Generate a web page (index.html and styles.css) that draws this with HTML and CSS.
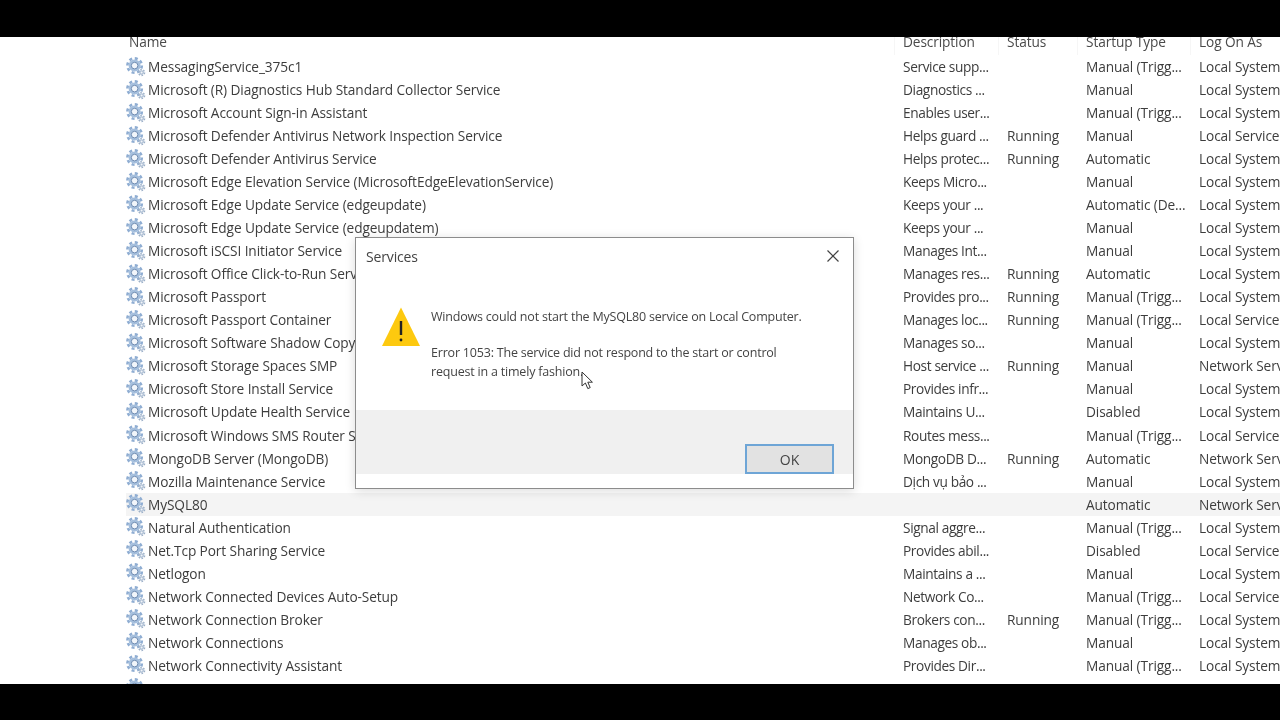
FILE: index.html
```html
<!DOCTYPE html>
<html lang="en">
<head>
<meta charset="utf-8">
<title>Services</title>
<link rel="stylesheet" href="styles.css">
</head>
<body>
<svg class="defs" width="0" height="0" aria-hidden="true">
  <symbol id="gear" viewBox="0 0 20 20">
    <circle class="g-teeth" cx="8.6" cy="8.6" r="7.2"/>
    <circle class="g-body" cx="8.6" cy="8.6" r="6"/>
    <circle class="g-hole" cx="8.6" cy="8.6" r="3.3"/>
    <circle class="g-teeth2" cx="15.6" cy="15.6" r="3"/>
    <circle class="g-body2" cx="15.6" cy="15.6" r="2.4"/>
    <circle class="g-hole2" cx="15.6" cy="15.6" r="1"/>
  </symbol>
</svg>
<div class="bar top"></div>
<main class="window">
  <div class="row head"><span class="cell">Name</span><span class="cell">Description</span><span class="cell">Status</span><span class="cell">Startup Type</span><span class="cell">Log On As</span></div>
  <div class="row"><svg class="gear"><use href="#gear"/></svg><span>MessagingService_375c1</span><span>Service supp...</span><span></span><span>Manual (Trigg...</span><span>Local System</span></div>
  <div class="row"><svg class="gear"><use href="#gear"/></svg><span>Microsoft (R) Diagnostics Hub Standard Collector Service</span><span>Diagnostics ...</span><span></span><span>Manual</span><span>Local System</span></div>
  <div class="row"><svg class="gear"><use href="#gear"/></svg><span>Microsoft Account Sign-in Assistant</span><span>Enables user...</span><span></span><span>Manual (Trigg...</span><span>Local System</span></div>
  <div class="row"><svg class="gear"><use href="#gear"/></svg><span>Microsoft Defender Antivirus Network Inspection Service</span><span>Helps guard ...</span><span>Running</span><span>Manual</span><span>Local Service</span></div>
  <div class="row"><svg class="gear"><use href="#gear"/></svg><span>Microsoft Defender Antivirus Service</span><span>Helps protec...</span><span>Running</span><span>Automatic</span><span>Local System</span></div>
  <div class="row"><svg class="gear"><use href="#gear"/></svg><span>Microsoft Edge Elevation Service (MicrosoftEdgeElevationService)</span><span>Keeps Micro...</span><span></span><span>Manual</span><span>Local System</span></div>
  <div class="row"><svg class="gear"><use href="#gear"/></svg><span>Microsoft Edge Update Service (edgeupdate)</span><span>Keeps your ...</span><span></span><span>Automatic (De...</span><span>Local System</span></div>
  <div class="row"><svg class="gear"><use href="#gear"/></svg><span>Microsoft Edge Update Service (edgeupdatem)</span><span>Keeps your ...</span><span></span><span>Manual</span><span>Local System</span></div>
  <div class="row"><svg class="gear"><use href="#gear"/></svg><span>Microsoft iSCSI Initiator Service</span><span>Manages Int...</span><span></span><span>Manual</span><span>Local System</span></div>
  <div class="row"><svg class="gear"><use href="#gear"/></svg><span>Microsoft Office Click-to-Run Service</span><span>Manages res...</span><span>Running</span><span>Automatic</span><span>Local System</span></div>
  <div class="row"><svg class="gear"><use href="#gear"/></svg><span>Microsoft Passport</span><span>Provides pro...</span><span>Running</span><span>Manual (Trigg...</span><span>Local System</span></div>
  <div class="row"><svg class="gear"><use href="#gear"/></svg><span>Microsoft Passport Container</span><span>Manages loc...</span><span>Running</span><span>Manual (Trigg...</span><span>Local Service</span></div>
  <div class="row"><svg class="gear"><use href="#gear"/></svg><span>Microsoft Software Shadow Copy Provider</span><span>Manages so...</span><span></span><span>Manual</span><span>Local System</span></div>
  <div class="row"><svg class="gear"><use href="#gear"/></svg><span>Microsoft Storage Spaces SMP</span><span>Host service ...</span><span>Running</span><span>Manual</span><span>Network Serv</span></div>
  <div class="row"><svg class="gear"><use href="#gear"/></svg><span>Microsoft Store Install Service</span><span>Provides infr...</span><span></span><span>Manual</span><span>Local System</span></div>
  <div class="row"><svg class="gear"><use href="#gear"/></svg><span>Microsoft Update Health Service</span><span>Maintains U...</span><span></span><span>Disabled</span><span>Local System</span></div>
  <div class="row"><svg class="gear"><use href="#gear"/></svg><span>Microsoft Windows SMS Router Service.</span><span>Routes mess...</span><span></span><span>Manual (Trigg...</span><span>Local Service</span></div>
  <div class="row"><svg class="gear"><use href="#gear"/></svg><span>MongoDB Server (MongoDB)</span><span>MongoDB D...</span><span>Running</span><span>Automatic</span><span>Network Serv</span></div>
  <div class="row"><svg class="gear"><use href="#gear"/></svg><span>Mozilla Maintenance Service</span><span>Dịch vụ bảo ...</span><span></span><span>Manual</span><span>Local System</span></div>
  <div class="row selected"><svg class="gear"><use href="#gear"/></svg><span>MySQL80</span><span></span><span></span><span>Automatic</span><span>Network Serv</span></div>
  <div class="row"><svg class="gear"><use href="#gear"/></svg><span>Natural Authentication</span><span>Signal aggre...</span><span></span><span>Manual (Trigg...</span><span>Local System</span></div>
  <div class="row"><svg class="gear"><use href="#gear"/></svg><span>Net.Tcp Port Sharing Service</span><span>Provides abil...</span><span></span><span>Disabled</span><span>Local Service</span></div>
  <div class="row"><svg class="gear"><use href="#gear"/></svg><span>Netlogon</span><span>Maintains a ...</span><span></span><span>Manual</span><span>Local System</span></div>
  <div class="row"><svg class="gear"><use href="#gear"/></svg><span>Network Connected Devices Auto-Setup</span><span>Network Co...</span><span></span><span>Manual (Trigg...</span><span>Local Service</span></div>
  <div class="row"><svg class="gear"><use href="#gear"/></svg><span>Network Connection Broker</span><span>Brokers con...</span><span>Running</span><span>Manual (Trigg...</span><span>Local System</span></div>
  <div class="row"><svg class="gear"><use href="#gear"/></svg><span>Network Connections</span><span>Manages ob...</span><span></span><span>Manual</span><span>Local System</span></div>
  <div class="row"><svg class="gear"><use href="#gear"/></svg><span>Network Connectivity Assistant</span><span>Provides Dir...</span><span></span><span>Manual (Trigg...</span><span>Local System</span></div>
  <div class="row clipped"><svg class="gear"><use href="#gear"/></svg></div>
</main>
<div class="bar bottom"></div>

<section class="dialog" role="dialog" aria-label="Services">
  <header class="dialog-title">
    <span>Services</span>
    <svg class="close" viewBox="0 0 12 12"><path d="M.5.5l11 11M11.5.5l-11 11"/></svg>
  </header>
  <div class="dialog-body">
    <svg class="warn" viewBox="0 0 38 40">
      <path class="warn-tri" d="M19 0.5 38 39H0Z"/>
      <path class="warn-mark" d="M19 14v14"/>
      <circle class="warn-dot" cx="19" cy="33" r="1.4"/>
    </svg>
    <div class="dialog-text">
      <p>Windows could not start the MySQL80 service on Local Computer.</p>
      <p>Error 1053: The service did not respond to the start or control<br>request in a timely fashion.</p>
    </div>
  </div>
  <footer class="dialog-foot"><button class="ok" type="button">OK</button></footer>
  <svg class="cursor" viewBox="0 0 13 19"><path d="M1 1v14l3.4-3 2.4 5.6 2.4-1-2.4-5.4H11.4Z"/></svg>
</section>
</body>
</html>
```
FILE: styles.css
```css
* { box-sizing: border-box; }
html, body { margin: 0; height: 720px; overflow: hidden; background: #000; }
body {
  display: flex;
  flex-direction: column;
  font-family: "Open Sans", "Liberation Sans", sans-serif;
  color: #3d3d3d;
}
.defs { position: absolute; }
.bar { background: #000; flex: none; }
.bar.top { height: 37px; }
.bar.bottom { height: 36px; }

.window {
  flex: 1;
  min-height: 0;
  overflow: hidden;
  background: #fff;
  padding-left: 126px;
  font-size: 13.7px;
  letter-spacing: -0.11px;
  filter: blur(0.45px);
}
.row {
  display: grid;
  grid-template-columns: 22px 755px 104px 79px 113px 81px;
  height: 23.04px;
  line-height: 23px;
  align-items: center;
  white-space: nowrap;
}
.row > span { overflow: hidden; }
.row > span:nth-of-type(2) { letter-spacing: -0.38px; }
.head {
  grid-template-columns: 774px 104px 79px 113px 81px;
  height: 18px;
  margin-left: 3px;
  padding-bottom: 8px;
  line-height: 10px;
  color: #4a4a4a;
}
.head .cell { position: relative; overflow: visible; }
.head > span:nth-of-type(2) { letter-spacing: -0.11px; }
.head .cell + .cell::before {
  content: "";
  position: absolute;
  left: -9px;
  top: -5px;
  bottom: -8px;
  border-left: 1px solid #f6f6f6;
}
.selected { background: #f4f4f4; }

.gear { width: 20px; height: 20px; display: block; filter: blur(0.35px); }
.g-teeth { fill: none; stroke: #8fadd2; stroke-width: 2.6; stroke-dasharray: 3 2.65; }
.g-body { fill: #a5bfdd; }
.g-hole { fill: #f2f6fb; stroke: #6f8cb2; stroke-width: 1; }
.g-teeth2 { fill: none; stroke: #9cb0c8; stroke-width: 1.4; stroke-dasharray: 1.6 1.5; }
.g-body2 { fill: #aebfd4; }
.g-hole2 { fill: #f2f5f9; }
.selected .g-teeth { stroke: #2a6cbc; }
.selected .g-body { fill: #2e74c6; }
.selected .g-hole { fill: #a9cdf0; stroke: #1f5aa4; }
.selected .g-teeth2 { stroke: #2a6cbc; }
.selected .g-body2 { fill: #3a7dcc; }

.dialog {
  position: absolute;
  left: 355px;
  top: 237px;
  width: 499px;
  height: 252px;
  display: flex;
  flex-direction: column;
  background: #fff;
  border: 1px solid #8c8c8c;
  box-shadow: 0 2px 10px rgba(0, 0, 0, .14);
  font-size: 12.5px;
  letter-spacing: -0.2px;
  color: #444;
}
.dialog-title {
  height: 36px;
  flex: none;
  display: flex;
  align-items: center;
  justify-content: space-between;
  padding: 0 14px 0 10px;
  font-size: 14px;
  letter-spacing: -0.15px;
  filter: blur(0.35px);
}
.close { width: 12px; height: 12px; fill: none; stroke: #444; stroke-width: 1.2; }
.dialog-body {
  flex: 1;
  display: flex;
  align-items: flex-start;
  padding: 33px 0 0 26px;
  filter: blur(0.35px);
}
.warn { width: 38px; height: 40px; flex: none; margin-right: 11px; }
.warn-tri { fill: #fdc90f; }
.warn-mark { stroke: #222; stroke-width: 2.4; fill: none; }
.warn-dot { fill: #222; }
.dialog-text p { margin: 0 0 17px; line-height: 19px; }
.dialog-foot {
  flex: none;
  height: 64px;
  margin-bottom: 14px;
  background: #f0f0f0;
  display: flex;
  justify-content: flex-end;
  align-items: flex-end;
  padding-right: 19px;
}
.ok {
  width: 89px;
  height: 30px;
  background: #e2e2e2;
  border: 2px solid #6ea5d6;
  color: #444;
  font: 14px "Open Sans", "Liberation Sans", sans-serif;
  padding: 0;
  filter: blur(0.3px);
}
.cursor {
  position: absolute;
  left: 225px;
  top: 133px;
  width: 13px;
  height: 19px;
  fill: #fff;
  stroke: #333;
  stroke-width: 1;
}
```
